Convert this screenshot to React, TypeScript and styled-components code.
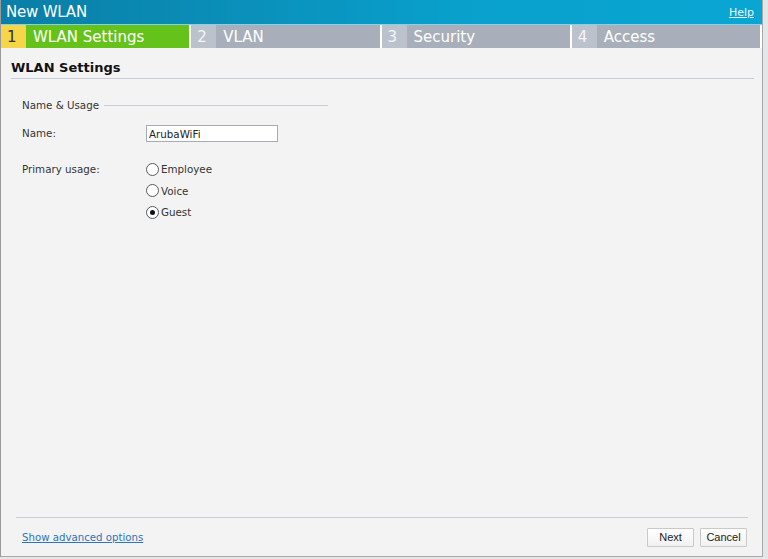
import React from "react";
import styled, { createGlobalStyle } from "styled-components";

const GlobalStyle = createGlobalStyle`
  html, body {
    margin: 0;
    padding: 0;
    background: #e4e6e8;
    font-family: "DejaVu Sans", Verdana, sans-serif;
  }
`;

const Dialog = styled.div`
  width: 763px;
  height: 557px;
  display: flex;
  flex-direction: column;
  background: #f3f3f3;
  border-left: 1px solid #9a9a9a;
  border-right: 1px solid #a8a8a8;
  border-bottom: 1px solid #a8a8a8;
  box-sizing: border-box;
`;

const TitleBar = styled.div`
  height: 25px;
  display: flex;
  align-items: center;
  justify-content: space-between;
  padding: 0 8px 0 5px;
  background: linear-gradient(to right, #0a7ea6, #09a0cc 60%, #0aa6d3);
  border-bottom: 1px solid #7fd3ea;
  box-sizing: border-box;
`;

const Title = styled.span`
  color: #ffffff;
  font-size: 15px;
  letter-spacing: -0.2px;
`;

const HelpLink = styled.a`
  color: #e9f7ff;
  font-size: 11px;
  text-decoration: underline;
  cursor: pointer;
`;

const Steps = styled.div`
  display: flex;
  gap: 2px;
  height: 23px;
  background: #ffffff;
  padding-right: 2px;
`;

const Step = styled.div`
  flex: 1;
  display: flex;
  font-size: 15px;
  line-height: 23px;
`;

const StepNumber = styled.span<{ $active?: boolean }>`
  width: 25px;
  padding: 1px 0 0 6px;
  box-sizing: border-box;
  background: ${(p) => (p.$active ? "#f7d548" : "#bcc2cb")};
  color: ${(p) => (p.$active ? "#333333" : "#f4f5f7")};
`;

const StepLabel = styled.span<{ $active?: boolean }>`
  flex: 1;
  padding: 1px 0 0 7px;
  background: ${(p) => (p.$active ? "#65c21b" : "#a8afba")};
  color: #ffffff;
`;

const Content = styled.div`
  flex: 1;
  padding: 12px 8px 0 10px;
  display: flex;
  flex-direction: column;
`;

const SectionTitle = styled.h2`
  margin: 0;
  font-size: 13px;
  font-weight: bold;
  color: #111111;
  padding-bottom: 3px;
  border-bottom: 1px solid #c4cdd9;
`;

const Fieldset = styled.div`
  width: 306px;
  padding: 20px 0 0 11px;
  display: flex;
  flex-direction: column;
`;

const Legend = styled.div`
  display: flex;
  align-items: center;
  gap: 5px;
  font-size: 10.3px;
  color: #333333;
  &::after {
    content: "";
    flex: 1;
    height: 1px;
    background: #c4cdd9;
  }
`;

const Row = styled.div<{ $space: number }>`
  display: grid;
  grid-template-columns: 124px 1fr;
  align-items: start;
  margin-top: ${(p) => p.$space}px;
`;

const Label = styled.label`
  font-size: 10.3px;
  color: #333333;
  line-height: 17px;
`;

const TextInput = styled.input`
  width: 132px;
  height: 17px;
  box-sizing: border-box;
  border: 1px solid #a5acb5;
  background: #ffffff;
  padding: 0 2px;
  font-family: "DejaVu Sans", Verdana, sans-serif;
  font-size: 10.3px;
  color: #222222;
  outline: none;
`;

const RadioGroup = styled.div`
  display: flex;
  flex-direction: column;
  gap: 5.5px;
`;

const RadioOption = styled.label`
  display: flex;
  align-items: center;
  gap: 2px;
  font-size: 10.3px;
  color: #333333;
  line-height: 16px;
`;

const RadioCircle = styled.span<{ $checked?: boolean }>`
  width: 11px;
  height: 11px;
  border-radius: 50%;
  border: 1px solid #555a60;
  background: #ffffff;
  display: inline-flex;
  align-items: center;
  justify-content: center;
  &::after {
    content: "";
    width: 5px;
    height: 5px;
    border-radius: 50%;
    background: ${(p) => (p.$checked ? "#111111" : "transparent")};
  }
`;

const Footer = styled.div`
  margin: 0 14px 0 15px;
  border-top: 1px solid #c4cdd9;
  height: 38px;
  display: flex;
  align-items: center;
  justify-content: space-between;
  padding: 0 1px 0 6px;
`;

const AdvancedLink = styled.a`
  font-size: 10.2px;
  color: #2f74b5;
  text-decoration: underline;
  cursor: pointer;
`;

const Buttons = styled.div`
  display: flex;
  gap: 6px;
`;

const Button = styled.button`
  width: 47px;
  height: 19px;
  font-family: "Liberation Sans", Arial, sans-serif;
  font-size: 11px;
  color: #222222;
  background: linear-gradient(#ffffff, #f1f1f1);
  border: 1px solid #c9c9c9;
  border-radius: 1px;
  padding: 0;
`;

const steps = ["WLAN Settings", "VLAN", "Security", "Access"];
const usages = ["Employee", "Voice", "Guest"];

export default function App() {
  return (
    <>
      <GlobalStyle />
      <Dialog>
        <TitleBar>
          <Title>New WLAN</Title>
          <HelpLink>Help</HelpLink>
        </TitleBar>
        <Steps>
          {steps.map((s, i) => (
            <Step key={s}>
              <StepNumber $active={i === 0}>{i + 1}</StepNumber>
              <StepLabel $active={i === 0}>{s}</StepLabel>
            </Step>
          ))}
        </Steps>
        <Content>
          <SectionTitle>WLAN Settings</SectionTitle>
          <Fieldset>
            <Legend>Name &amp; Usage</Legend>
            <Row $space={14}>
              <Label>Name:</Label>
              <TextInput defaultValue="ArubaWiFi" />
            </Row>
            <Row $space={19}>
              <Label>Primary usage:</Label>
              <RadioGroup>
                {usages.map((u) => (
                  <RadioOption key={u}>
                    <RadioCircle $checked={u === "Guest"} />
                    {u}
                  </RadioOption>
                ))}
              </RadioGroup>
            </Row>
          </Fieldset>
        </Content>
        <Footer>
          <AdvancedLink>Show advanced options</AdvancedLink>
          <Buttons>
            <Button>Next</Button>
            <Button>Cancel</Button>
          </Buttons>
        </Footer>
      </Dialog>
    </>
  );
}
